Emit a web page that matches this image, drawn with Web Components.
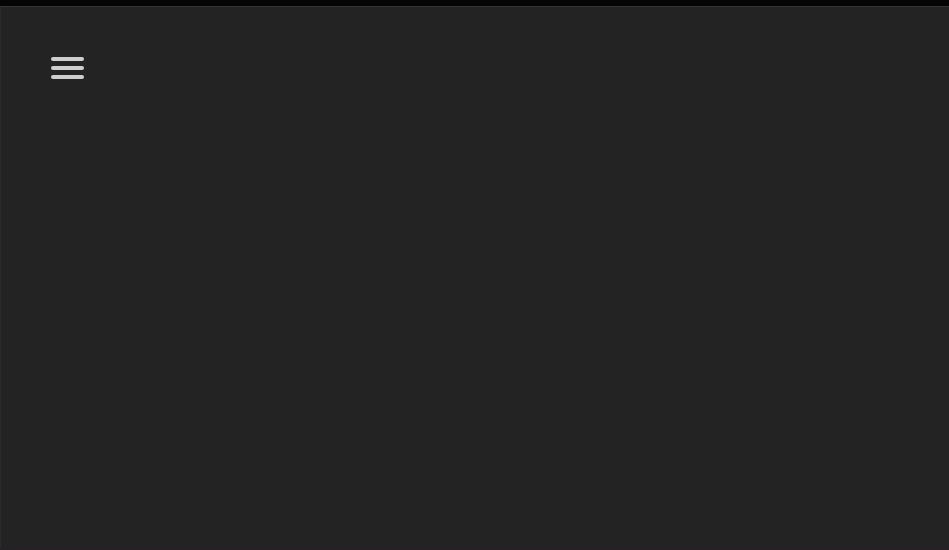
<!DOCTYPE html>
<html lang="en">
<head>
    <meta charset="utf-8">
    <meta name="viewport" content="width=device-width, initial-scale=1">
    <title>Menu</title>
    <style>
        body {
            margin: 0;
            background: #232323;
            font-family: "Liberation Sans", sans-serif;
        }
    </style>
</head>
<body>
    <app-window>
        <menu-button label="Open menu"></menu-button>
    </app-window>

    <script>
        customElements.define('menu-button',
            class extends HTMLElement {
                connectedCallback() {
                    const shadowRoot = this.attachShadow({mode: 'open'});
                    shadowRoot.innerHTML = `
    <style>
        :host {
            display: block;
        }

        button {
            display: flex;
            flex-direction: column;
            gap: 5px;
            width: 33px;
            padding: 0;
            border: 0;
            background: none;
            cursor: pointer;
        }

        .bar {
            width: 100%;
            height: 4px;
            border-radius: 2px;
            background: #cdcecd;
        }
    </style>

    <button type="button">
        <span class="bar"></span>
        <span class="bar"></span>
        <span class="bar"></span>
    </button>
`;
                    shadowRoot.querySelector('button').setAttribute('aria-label', this.getAttribute('label'));
                }
            }
        );

        customElements.define('app-window',
            class extends HTMLElement {
                connectedCallback() {
                    const shadowRoot = this.attachShadow({mode: 'open'});
                    shadowRoot.innerHTML = `
    <style>
        :host {
            display: flex;
            flex-direction: column;
            min-height: 100vh;
        }

        .title-bar {
            height: 6px;
            background: #050505;
        }

        main {
            display: flex;
            align-items: flex-start;
            flex: 1;
            padding: 50px;
            border-top: 1px solid #343434;
            border-left: 1px solid #2b2b2b;
            border-bottom: 3px solid #272126;
            background: #232323;
        }
    </style>

    <div class="title-bar"></div>
    <main><slot></slot></main>
`;
                }
            }
        );
    </script>
</body>
</html>
